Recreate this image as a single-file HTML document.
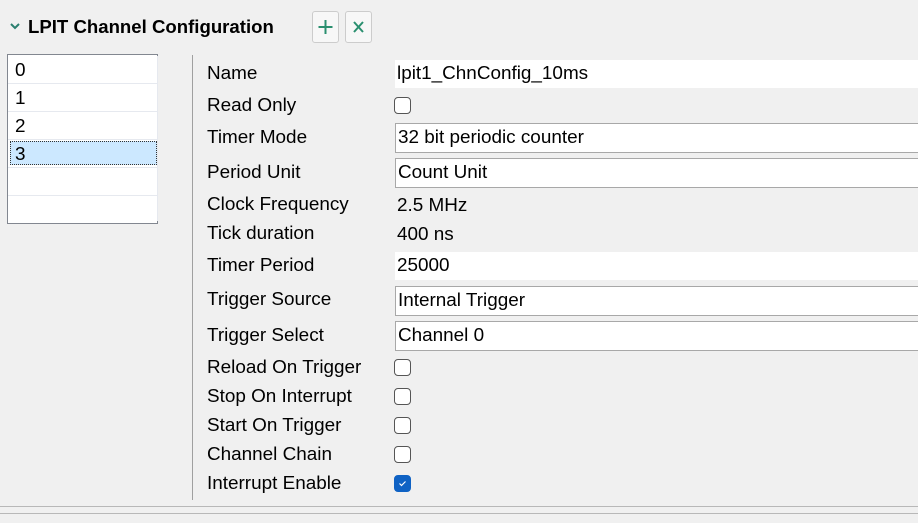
<!DOCTYPE html>
<html><head><style>
body{margin:0;width:918px;height:523px;background:#f0f0f0;font-family:"Liberation Sans",sans-serif;position:relative;overflow:hidden;color:#000}
.a{position:absolute;white-space:nowrap}
.l{font-size:18.9px;left:207px;line-height:20px}
.f{position:absolute;left:395px;width:530px;background:#fff;box-sizing:border-box;font-size:18.9px;padding-left:2px}
.b{border:1px solid #a8a8a8}
.cb{position:absolute;left:394px;width:17px;height:17px;border:1.3px solid #555;border-radius:4px;box-sizing:border-box;background:#fff}
.li{position:absolute;left:8px;width:150px;height:1px;background:#e6e9ef}
.n{position:absolute;left:15px;font-size:18.9px}
</style></head><body>
<svg class="a" style="left:9px;top:21px" width="12" height="10"><path d="M2 3l4 4 4-4" stroke="#2a7f6f" stroke-width="2" fill="none"/></svg>
<div class="a" style="left:28px;top:16px;font-size:18.6px;font-weight:bold">LPIT Channel Configuration</div>
<div class="a" style="left:312px;top:11px;width:25px;height:30px;border:1px solid #ccc;border-radius:3px;background:#f7f7f7"><svg width="25" height="30"><path d="M12.5 8v14M5.5 15h14" stroke="#2a8f6f" stroke-width="2"/></svg></div>
<div class="a" style="left:345px;top:11px;width:25px;height:30px;border:1px solid #ccc;border-radius:3px;background:#f7f7f7"><svg width="25" height="30"><path d="M8 10l9 10M17 10l-9 10" stroke="#2a8f6f" stroke-width="2"/></svg></div>
<div class="a" style="left:7px;top:54px;width:149px;height:168px;border:1px solid #828790;background:#fff"></div>
<div class="a" style="left:157px;top:56px;width:1px;height:165px;background:#e6e9ef"></div>
<div class="li" style="top:83px"></div><div class="li" style="top:111px"></div><div class="li" style="top:139px"></div><div class="li" style="top:167px"></div><div class="li" style="top:195px"></div>
<div class="a" style="left:10px;top:141px;width:147px;height:24px;background:#cce8ff;border:1px dotted #333;box-sizing:border-box"></div>
<div class="n a" style="top:60px">0</div><div class="n a" style="top:88px">1</div><div class="n a" style="top:116px">2</div><div class="n a" style="top:144px">3</div>
<div class="a" style="left:192px;top:55px;width:1px;height:445px;background:#a0a0a0"></div>
<div class="a" style="left:0;top:506px;width:918px;height:1px;background:#b8b8b8"></div>
<div class="a" style="left:0;top:513px;width:918px;height:1px;background:#b8b8b8"></div>
<div class="f" style="top:60px;height:28px;line-height:28px">lpit1_ChnConfig_10ms</div>
<div class="f b" style="top:123px;height:30px;line-height:28px">32 bit periodic counter</div>
<div class="f b" style="top:158px;height:30px;line-height:28px">Count Unit</div>
<div class="a" style="left:397px;top:195px;font-size:18.9px">2.5 MHz</div>
<div class="a" style="left:397px;top:224px;font-size:18.9px">400 ns</div>
<div class="f" style="top:252px;height:28px;line-height:28px">25000</div>
<div class="f b" style="top:286px;height:30px;line-height:28px">Internal Trigger</div>
<div class="f b" style="top:321px;height:30px;line-height:28px">Channel 0</div>
<div class="a l" style="top:64px">Name</div>
<div class="a l" style="top:96px">Read Only</div>
<div class="a l" style="top:128px">Timer Mode</div>
<div class="a l" style="top:163px">Period Unit</div>
<div class="a l" style="top:195px">Clock Frequency</div>
<div class="a l" style="top:224px">Tick duration</div>
<div class="a l" style="top:256px">Timer Period</div>
<div class="a l" style="top:290px">Trigger Source</div>
<div class="a l" style="top:326px">Trigger Select</div>
<div class="a l" style="top:358px">Reload On Trigger</div>
<div class="a l" style="top:387px">Stop On Interrupt</div>
<div class="a l" style="top:416px">Start On Trigger</div>
<div class="a l" style="top:445px">Channel Chain</div>
<div class="a l" style="top:474px">Interrupt Enable</div>
<div class="cb" style="top:97px"></div>
<div class="cb" style="top:359px"></div>
<div class="cb" style="top:388px"></div>
<div class="cb" style="top:417px"></div>
<div class="cb" style="top:446px"></div>
<div class="cb" style="top:475px;background:#0f62c4;border-color:#0f62c4"><svg width="15" height="15" style="position:absolute;left:0;top:0"><path d="M4.5 7.5l2 2 4-4" stroke="#fff" stroke-width="1.2" fill="none"/></svg></div>
</body></html>
